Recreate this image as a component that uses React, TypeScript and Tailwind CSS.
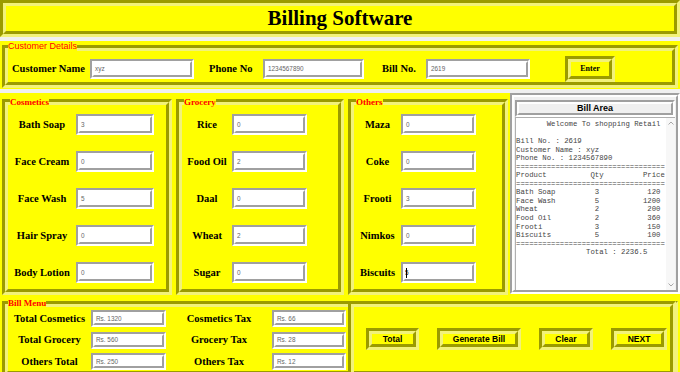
import React from "react";

const serif = "font-['Liberation_Serif',serif]";
const sans = "font-['Liberation_Sans',sans-serif]";

function Groove({ className = "", inner = "", children }: { className?: string; inner?: string; children?: React.ReactNode }) {
  return (
    <div className={`border-[3px] border-t-[#9b9b00] border-l-[#9b9b00] border-b-[#f2f27a] border-r-[#f2f27a] ${className}`}>
      <div className={`h-full border-[3px] border-t-[#f2f27a] border-l-[#f2f27a] border-b-[#9b9b00] border-r-[#9b9b00] ${inner}`}>{children}</div>
    </div>
  );
}

function Entry({ value, className = "", caret = false }: { value: string; className?: string; caret?: boolean }) {
  return (
    <div className={`shrink-0 border-2 border-t-[#a0a0a0] border-l-[#a0a0a0] border-b-white border-r-white ${className}`}>
      <div className={`h-full bg-white border-2 border-t-white border-l-white border-b-[#a0a0a0] border-r-[#a0a0a0] flex items-center pl-[1px] text-[6.4px] ${caret ? "text-black" : "text-[#666]"} ${sans}`}>
        {caret && <span className="inline-block w-px h-[10px] bg-black -mr-[2px]" />}
        {value}
      </div>
    </div>
  );
}

function Button({ label, className = "", text = "" }: { label: string; className?: string; text?: string }) {
  return (
    <Groove className={`shrink-0 border-2 ${className}`} inner={`border-2 flex items-center justify-center bg-[#ffff00] ${text}`}>
      {label}
    </Groove>
  );
}

function FrameLabel({ children, className = "" }: { children: React.ReactNode; className?: string }) {
  return <span className={`absolute top-0 bg-[#ffff00] leading-none text-[#ff0000] ${className}`}>{children}</span>;
}

function ItemFrame({ title, items, width, labelW, entryW }: { title: string; items: [string, string][]; width: string; labelW: string; entryW: string }) {
  return (
    <div className={`relative ${width} h-full bg-[#ffff00] px-[2px] pt-[6px] pb-[2px]`}>
      <FrameLabel className={`top-[5px] left-[10px] text-[9px] font-bold ${serif}`}>{title}</FrameLabel>
      <Groove className="h-full" inner="flex flex-col gap-[16px] pt-[9px]">
        {items.map(([name, val]) => (
          <div key={name} className="flex items-center">
            <span className={`${labelW} text-center text-[10.5px] font-bold ${serif}`}>{name}</span>
            <Entry value={val} className={`${entryW} h-[21px]`} caret={name === "Biscuits"} />
          </div>
        ))}
      </Groove>
    </div>
  );
}

const billText = `       Welcome To shopping Retail

Bill No. : 2619
Customer Name : xyz
Phone No. : 1234567890
==================================
Product          Qty         Price
==================================
Bath Soap         3           120
Face Wash         5          1200
Wheat             2           200
Food Oil          2           360
Frooti            3           150
Biscuits          5           100
==================================
                Total : 2236.5`;

function BillArea() {
  return (
    <div className="w-[170px] h-full bg-[#ffff00] pb-[3px]">
      <div className="h-full bg-[#f0f0f0] border-2 border-t-[#a0a0a0] border-l-[#a0a0a0] border-b-white border-r-white">
        <div className="h-full border-2 border-t-white border-l-white border-b-[#a0a0a0] border-r-[#a0a0a0] flex flex-col px-[1px] pt-[3px]">
          <div className="h-[17px] shrink-0 border-2 border-t-[#a0a0a0] border-l-[#a0a0a0] border-b-white border-r-white">
            <div className={`h-full bg-[#f0f0f0] border-2 border-t-white border-l-white border-b-[#a0a0a0] border-r-[#a0a0a0] flex items-center justify-center text-[9px] font-bold ${sans}`}>
              Bill Area
            </div>
          </div>
          <div className="flex-1 flex bg-white border-l border-t border-[#b0b0b0] min-h-0">
            <pre className="flex-1 pt-[2px] text-[7.3px] leading-[8.55px] text-[#444] font-['Liberation_Mono',monospace] overflow-hidden">{billText}</pre>
            <div className="w-[9px] bg-[#f7f7f7] flex flex-col justify-between items-center py-[3px]">
              <svg width="6" height="4" viewBox="0 0 6 4"><path d="M0.5 3.5 L3 1 L5.5 3.5" stroke="#a8a8a8" fill="none" /></svg>
              <svg width="6" height="4" viewBox="0 0 6 4"><path d="M0.5 0.5 L3 3 L5.5 0.5" stroke="#a8a8a8" fill="none" /></svg>
            </div>
          </div>
        </div>
      </div>
    </div>
  );
}

export default function App() {
  const menu: [string, string, string, string][] = [
    ["Total Cosmetics", "Rs. 1320", "Cosmetics Tax", "Rs. 66"],
    ["Total Grocery", "Rs. 560", "Grocery Tax", "Rs. 28"],
    ["Others Total", "Rs. 250", "Others Tax", "Rs. 12"],
  ];
  return (
    <div className="w-[680px] h-[372px] overflow-hidden bg-[#f0f0f0] flex flex-col text-black">
      {/* Title */}
      <Groove className="h-[37px] shrink-0 bg-[#ffff00]" inner="flex items-center justify-center">
        <h1 className={`text-[21px] font-bold leading-none ${serif}`}>Billing Software</h1>
      </Groove>

      {/* Customer details */}
      <div className="relative mt-[4px] h-[48px] shrink-0 bg-[#ffff00] px-[2px] pt-[4px] pb-[1px]">
        <FrameLabel className={`top-[1px] left-[8px] text-[9px] ${sans}`}>Customer Details</FrameLabel>
        <Groove className="h-full" inner="flex items-center pl-[4px] pt-[5px]">
          <span className={`w-[78px] text-[10.5px] font-bold ${serif}`}>Customer Name</span>
          <Entry value="xyz" className="w-[104px] h-[20px]" />
          <span className={`w-[69px] pl-[15px] text-[10.5px] font-bold ${serif}`}>Phone No</span>
          <Entry value="1234567890" className="w-[101px] h-[20px]" />
          <span className={`w-[62px] pl-[18px] text-[10.5px] font-bold ${serif}`}>Bill No.</span>
          <Entry value="2619" className="w-[104px] h-[20px]" />
          <Button label="Enter" className="ml-[35px] w-[50px] h-[26px]" text={`text-[8px] font-bold ${serif}`} />
        </Groove>
      </div>

      {/* Items */}
      <div className="mt-[4px] h-[204px] shrink-0 flex bg-[#ffff00]">
        <ItemFrame
          title="Cosmetics"
          width="w-[174px]"
          labelW="w-[68px]"
          entryW="w-[78px]"
          items={[["Bath Soap", "3"], ["Face Cream", "0"], ["Face Wash", "5"], ["Hair Spray", "0"], ["Body Lotion", "0"]]}
        />
        <ItemFrame
          title="Grocery"
          width="w-[172px]"
          labelW="w-[50px]"
          entryW="w-[75px]"
          items={[["Rice", "0"], ["Food Oil", "2"], ["Daal", "0"], ["Wheat", "2"], ["Sugar", "0"]]}
        />
        <ItemFrame
          title="Others"
          width="w-[164px]"
          labelW="w-[47px]"
          entryW="w-[75px]"
          items={[["Maza", "0"], ["Coke", "0"], ["Frooti", "3"], ["Nimkos", "0"], ["Biscuits", "5"]]}
        />
        <BillArea />
      </div>

      {/* Bill menu */}
      <div className="relative h-[80px] shrink-0 bg-[#ffff00] px-[2px] pt-[4px]">
        <FrameLabel className={`top-[2px] left-[8px] text-[9px] font-bold ${serif}`}>Bill Menu</FrameLabel>
        <Groove className="h-full" inner="flex">
          <div className="w-[340px] flex flex-col gap-[4.5px] pt-[3px]">
            {menu.map(([a, av, b, bv]) => (
              <div key={a} className="flex items-center">
                <span className={`w-[83px] text-center text-[10.5px] font-bold ${serif}`}>{a}</span>
                <Entry value={av} className="w-[75px] h-[17px]" />
                <span className={`w-[106px] text-center text-[10.5px] font-bold ${serif}`}>{b}</span>
                <Entry value={bv} className="w-[74px] h-[17px]" />
              </div>
            ))}
          </div>
          <Groove className="-mt-[6px] -mr-[4px] flex-1 h-[80px]" inner="flex items-start pt-[21px] pl-[12px]">
            <Button label="Total" className="w-[53px] h-[22px]" text={`text-[8.5px] font-bold ${sans}`} />
            <Button label="Generate Bill" className="ml-[18px] w-[84px] h-[22px]" text={`text-[8.5px] font-bold ${sans}`} />
            <Button label="Clear" className="ml-[18px] w-[54px] h-[22px]" text={`text-[8.5px] font-bold ${sans}`} />
            <Button label="NEXT" className="ml-[18px] w-[56px] h-[22px]" text={`text-[8.5px] font-bold ${sans}`} />
          </Groove>
        </Groove>
      </div>
    </div>
  );
}
